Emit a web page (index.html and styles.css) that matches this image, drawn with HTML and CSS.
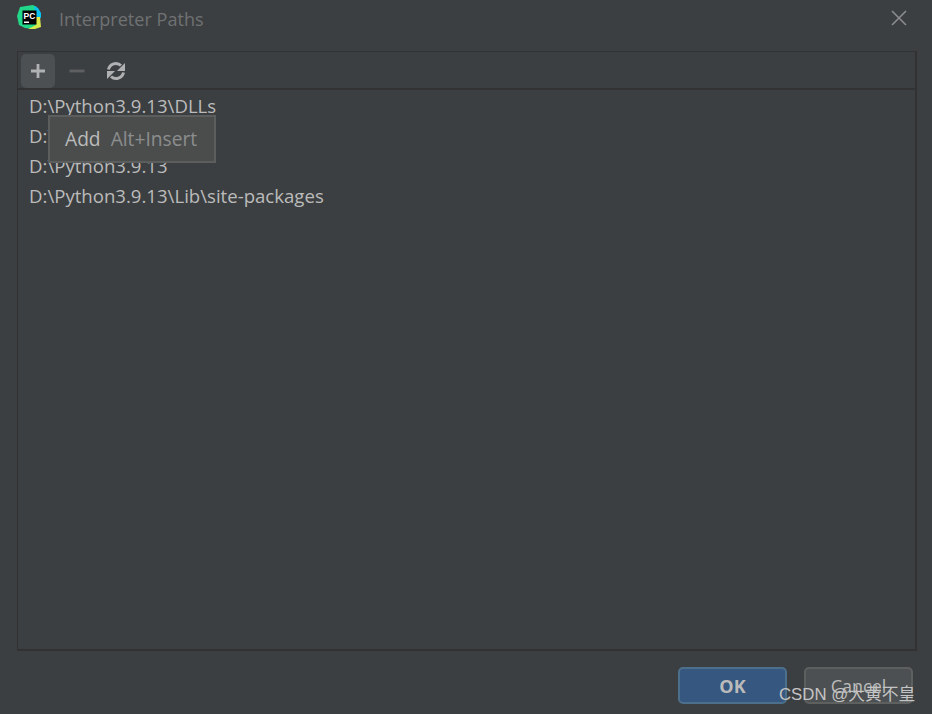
FILE: index.html
```html
<!DOCTYPE html>
<html lang="en">
<head>
  <meta charset="UTF-8" />
  <title>Interpreter Paths</title>
  <link rel="stylesheet" href="styles.css">
</head>
<body>
  <div class="dialog">
    <div class="titlebar">
      <svg class="logo" width="25" height="25" viewBox="0 0 25 25">
        <path d="M3 2 L9 1 L16 0 L20 2 L19 6 L22 12 L23 20 L17 24 L8 23 L2 20 L0 11 Z" fill="#21d789"/>
        <path d="M17 1 L21 3 L24 8 L24 13 L19 12 L18 6 Z" fill="#07c3f2"/>
        <path d="M11 24 L18 24 L24 22 L23 12 L19 12 L19 20 Z" fill="#d8e84a"/>
        <rect x="5.500" y="5.500" width="14" height="14" fill="#000"/>
        <text class="logo-text" x="6.500" y="13.500">PC</text>
        <rect x="7" y="16.500" width="5" height="1.500" fill="#fff"/>
      </svg>
      <span class="title">Interpreter Paths</span>
      <svg class="close" width="16" height="16" viewBox="0 0 16 16">
        <path d="M1 1 L15 15 M15 1 L1 15" stroke="#8a8c8e" stroke-width="1.6" fill="none"/>
      </svg>
    </div>

    <div class="panel">
      <div class="toolbar">
        <button class="tool tool-active">
          <svg width="18" height="18" viewBox="0 0 18 18"><path d="M9 2 V16 M2 9 H16" stroke="#afb1b3" stroke-width="2.800" fill="none"/></svg>
        </button>
        <button class="tool">
          <svg width="18" height="18" viewBox="0 0 18 18"><path d="M1.500 9 H16.500" stroke="#5d5f61" stroke-width="2.800" fill="none"/></svg>
        </button>
        <button class="tool">
          <svg width="20" height="20" viewBox="0 0 20 20">
            <path d="M2.500 8.500 A7.500 7.500 0 0 1 15 4.500 M17.500 11.500 A7.500 7.500 0 0 1 5 15.500" stroke="#afb1b3" stroke-width="3" fill="none"/>
            <path d="M19 2 V10 H11 Z M1 18 V10 H9 Z" fill="#afb1b3"/>
          </svg>
        </button>
      </div>
      <ul class="paths">
        <li>D:\Python3.9.13\DLLs</li>
        <li>D:\Python3.9.13\lib</li>
        <li>D:\Python3.9.13</li>
        <li>D:\Python3.9.13\Lib\site-packages</li>
      </ul>
    </div>

    <div class="footer">
      <button class="btn btn-ok">OK</button>
      <button class="btn">Cancel</button>
    </div>

    <div class="tooltip"><span>Add</span><span class="shortcut">Alt+Insert</span></div>
    <div class="watermark">CSDN @大黄不皇</div>
  </div>
</body>
</html>
```

FILE: styles.css
```css
html, body {
  height: 100%;
  margin: 0;
  padding: 0;
  background-color: #3c3f41;
  overflow: hidden;
}

.dialog {
  position: relative;
  width: 932px;
  height: 714px;
  display: flex;
  flex-direction: column;
  font-family: "Open Sans", "Noto Sans CJK SC", sans-serif;
  color: #bbbbbb;
}

.titlebar {
  height: 51px;
  flex: none;
  display: flex;
  align-items: flex-start;
  padding: 5px 25px 0 17px;
  box-sizing: border-box;
}

.logo {
  flex: none;
}

.logo-text {
  font-family: "Liberation Sans", sans-serif;
  font-size: 8.5px;
  font-weight: bold;
  fill: #fff;
}

.title {
  margin: 1px 0 0 17px;
  font-size: 18px;
  letter-spacing: 0.05px;
  line-height: 26px;
  color: #6f7173;
}

.close {
  margin: 5px 0 0 auto;
}

.panel {
  flex: none;
  width: 900px;
  height: 600px;
  margin-left: 17px;
  box-sizing: border-box;
  border: 1px solid #323232;
  border-right-width: 2px;
  border-bottom-width: 2px;
}

.toolbar {
  height: 38px;
  box-sizing: border-box;
  display: flex;
  align-items: center;
  gap: 5px;
  padding: 1px 0 0 3px;
  border-bottom: 2px solid #323232;
}

.tool {
  width: 34px;
  height: 34px;
  padding: 0;
  border: none;
  border-radius: 5px;
  background: none;
  display: flex;
  align-items: center;
  justify-content: center;
}

.tool-active {
  background-color: #4c5052;
}

.paths {
  list-style: none;
  margin: 0;
  padding: 1px 0 0 11px;
  font-size: 18.6px;
  line-height: 30px;
}

.footer {
  flex: 1;
  display: flex;
  justify-content: flex-end;
  gap: 17px;
  padding: 16px 19px 0 0;
}

.btn {
  width: 109px;
  height: 37px;
  box-sizing: border-box;
  border: 2px solid #5e6060;
  border-radius: 5px;
  background-color: #4c5052;
  color: #bbbbbb;
  font-family: inherit;
  font-size: 18px;
  padding: 0;
}

.btn-ok {
  border-color: #4c708c;
  background-color: #365880;
  font-weight: bold;
}

.tooltip {
  position: absolute;
  left: 48px;
  top: 115px;
  width: 168px;
  height: 48px;
  box-sizing: border-box;
  display: flex;
  align-items: center;
  gap: 10px;
  padding: 0 0 2px 15px;
  background-color: #4b4d4d;
  border: 2px solid #5c5e5e;
  font-size: 19.2px;
}

.shortcut {
  color: #8c8e8e;
}

.watermark {
  position: absolute;
  left: 779px;
  top: 683px;
  font-family: "Liberation Sans", "Noto Sans CJK SC", sans-serif;
  font-size: 16.8px;
  line-height: 24px;
  color: #c4c4c4;
  white-space: nowrap;
}
```
